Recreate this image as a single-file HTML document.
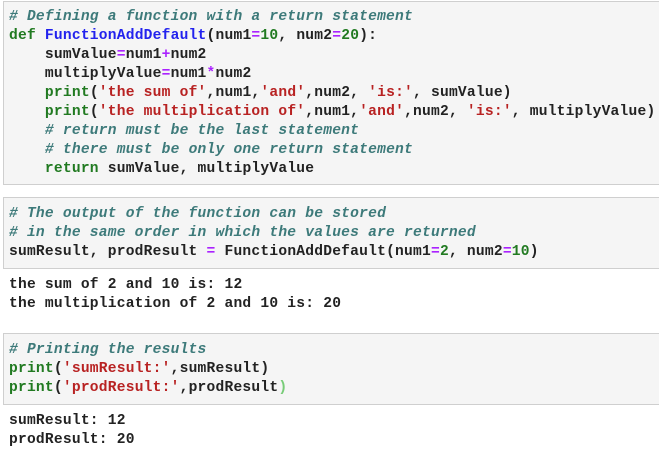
<!DOCTYPE html>
<html><head><style>
body{margin:0;background:#fff;width:659px;height:449px;overflow:hidden;font-family:"Liberation Mono",monospace;font-size:14.6px;letter-spacing:0.22px;font-weight:bold;color:#222}
.box{position:absolute;left:3px;width:670px;background:#f5f5f5;border:1px solid #cfcfcf;box-sizing:border-box}
.l{position:absolute;left:9px;white-space:pre;line-height:19px}
.c{color:#3d7a7a;font-style:italic;font-weight:bold}
.k{color:#217a21}
.f{color:#2222ee}
.s{color:#b82222}
.o{color:#aa22ff}
.n{color:#217a21}
</style></head><body>
<div class="box" style="top:1px;height:184px"></div>
<div class="l" style="top:8px"><span class="c"># Defining a function with a return statement</span>
<span class="k">def</span> <span class="f">FunctionAddDefault</span>(num1<span class="o">=</span><span class="n">10</span>, num2<span class="o">=</span><span class="n">20</span>):
    sumValue<span class="o">=</span>num1<span class="o">+</span>num2
    multiplyValue<span class="o">=</span>num1<span class="o">*</span>num2
    <span class="k">print</span>(<span class="s">'the sum of'</span>,num1,<span class="s">'and'</span>,num2, <span class="s">'is:'</span>, sumValue)
    <span class="k">print</span>(<span class="s">'the multiplication of'</span>,num1,<span class="s">'and'</span>,num2, <span class="s">'is:'</span>, multiplyValue)
    <span class="c"># return must be the last statement</span>
    <span class="c"># there must be only one return statement</span>
    <span class="k">return</span> sumValue, multiplyValue</div>
<div class="box" style="top:197px;height:72px"></div>
<div class="l" style="top:205px"><span class="c"># The output of the function can be stored</span>
<span class="c"># in the same order in which the values are returned</span>
sumResult, prodResult <span class="o">=</span> FunctionAddDefault(num1<span class="o">=</span><span class="n">2</span>, num2<span class="o">=</span><span class="n">10</span>)</div>
<div class="l" style="top:276px">the sum of 2 and 10 is: 12
the multiplication of 2 and 10 is: 20</div>
<div class="box" style="top:333px;height:72px"></div>
<div class="l" style="top:341px"><span class="c"># Printing the results</span>
<span class="k">print</span>(<span class="s">'sumResult:'</span>,sumResult)
<span class="k">print</span>(<span class="s">'prodResult:'</span>,prodResult<span style="color:#7c7">)</span></div>
<div class="l" style="top:412px">sumResult: 12
prodResult: 20</div>
</body></html>
